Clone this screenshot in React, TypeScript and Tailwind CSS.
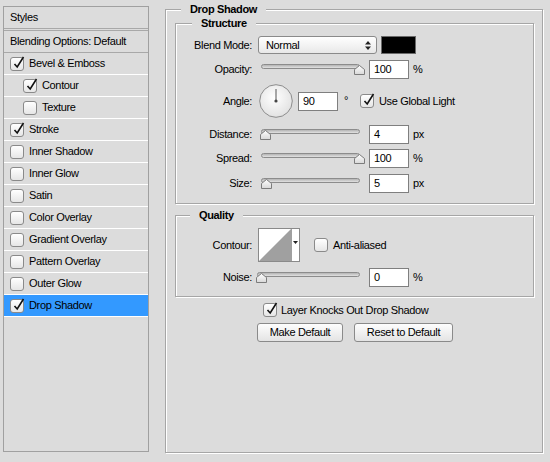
import React from "react";

const font = { fontFamily: '"Liberation Sans", Arial, sans-serif' };

function Check({ checked }: { checked: boolean }) {
  return (
    <div className="relative w-[14px] h-[14px] shrink-0 rounded-[3px] border border-[#8a8a8a] bg-gradient-to-b from-[#ffffff] to-[#e6e6e6]">
      {checked && (
        <svg className="absolute left-[1px] top-[-3px]" width="14" height="15" viewBox="0 0 14 15">
          <path d="M2.5 9 L5.2 12 L11.5 2" fill="none" stroke="#111" strokeWidth="1.6" strokeLinejoin="miter" />
        </svg>
      )}
    </div>
  );
}

const rows: { label: string; checked: boolean; indent?: boolean; selected?: boolean }[] = [
  { label: "Bevel & Emboss", checked: true },
  { label: "Contour", checked: true, indent: true },
  { label: "Texture", checked: false, indent: true },
  { label: "Stroke", checked: true },
  { label: "Inner Shadow", checked: false },
  { label: "Inner Glow", checked: false },
  { label: "Satin", checked: false },
  { label: "Color Overlay", checked: false },
  { label: "Gradient Overlay", checked: false },
  { label: "Pattern Overlay", checked: false },
  { label: "Outer Glow", checked: false },
  { label: "Drop Shadow", checked: true, selected: true },
];

function Slider({ trackLeft, trackWidth, thumb }: { trackLeft: number; trackWidth: number; thumb: number }) {
  return (
    <div className="relative w-[117px] h-[19px] shrink-0">
      <div
        className="absolute top-[4px] h-[5px] rounded-full border border-[#8c8c8c] bg-gradient-to-b from-[#b4b4b4] to-[#e2e2e2]"
        style={{ left: trackLeft, width: trackWidth }}
      />
      <svg className="absolute top-[5px]" style={{ left: thumb }} width="12" height="10" viewBox="0 0 12 10">
        <defs>
          <linearGradient id="tg" x1="0" y1="0" x2="0" y2="1">
            <stop offset="0" stopColor="#ffffff" />
            <stop offset="1" stopColor="#d8d8d8" />
          </linearGradient>
        </defs>
        <polygon points="0.5,9.5 0.5,4.5 5.5,0.5 10.5,4.5 10.5,9.5" fill="url(#tg)" stroke="#7c7c7c" strokeWidth="1" />
      </svg>
    </div>
  );
}

function Input({ value, w = 40 }: { value: string; w?: number }) {
  return (
    <div
      className="h-[19px] shrink-0 border border-[#7f7f7f] bg-white pl-[4px] flex items-center text-[11px] text-black"
      style={{ width: w }}
    >
      {value}
    </div>
  );
}

function Label({ children }: { children: React.ReactNode }) {
  return <div className="w-[76px] shrink-0 text-right text-[11px] text-black">{children}</div>;
}

function Group({
  legend,
  legendLeft,
  className,
  children,
}: {
  legend: string;
  legendLeft: number;
  className: string;
  children: React.ReactNode;
}) {
  return (
    <div
      className={
        "relative border border-[#a6a6a6] shadow-[inset_1px_1px_0_#ffffff,1px_1px_0_#ffffff] " + className
      }
    >
      <div
        className="absolute top-[-8px] bg-[#dcdcdc] px-[9px] text-[11px] font-bold text-black leading-[14px]"
        style={{ left: legendLeft }}
      >
        {legend}
      </div>
      {children}
    </div>
  );
}

function Button({ label, w }: { label: string; w: number }) {
  return (
    <div
      className="h-[19px] shrink-0 rounded-[3px] border border-[#8a8a8a] bg-gradient-to-b from-[#fdfdfd] to-[#e4e4e4] flex items-center justify-center text-[11px] text-black"
      style={{ width: w }}
    >
      {label}
    </div>
  );
}

export default function App() {
  return (
    <div className="w-[550px] h-[462px] bg-[#dcdcdc] flex items-start tracking-[-0.35px]" style={font}>
      {/* Left panel */}
      <div className="ml-[3px] mt-[6px] w-[146px] h-[446px] border border-[#a0a0a0] flex flex-col">
        <div className="h-[22px] shrink-0 flex items-center pl-[6px] text-[11px] text-black border-b border-[#a8a8a8]">Styles</div>
        <div className="h-[23px] shrink-0 mt-[1px] border-t border-b border-[#a8a8a8] flex items-center pl-[6px] text-[11px] text-black">
          Blending Options: Default
        </div>
        {rows.map((r) => (
          <div
            key={r.label}
            className={
              "h-[22px] shrink-0 border-b border-white flex items-center text-[11px] text-black " +
              (r.selected ? "bg-[#3399ff]" : "")
            }
          >
            <div className={r.indent ? "pl-[19px]" : "pl-[6px]"}>
              <Check checked={r.checked} />
            </div>
            <span className="ml-[5px]">{r.label}</span>
          </div>
        ))}
      </div>

      {/* Right panel */}
      <Group legend="Drop Shadow" legendLeft={15} className="ml-[16px] mt-[9px] w-[378px] h-[444px] flex flex-col">
        <Group legend="Structure" legendLeft={16} className="ml-[9px] mt-[13px] w-[359px] h-[181px] pt-[12px] flex flex-col">
          {/* Blend mode */}
          <div className="flex items-center h-[18px]">
            <Label>Blend Mode:</Label>
            <div className="ml-[6px] w-[119px] h-[18px] rounded-[3px] border border-[#8a8a8a] bg-gradient-to-b from-[#ffffff] to-[#e8e8e8] flex items-center pl-[7px] pr-[5px] justify-between text-[11px] text-black">
              <span>Normal</span>
              <svg width="6" height="9" viewBox="0 0 6 9">
                <polygon points="3,0 6,3.5 0,3.5" fill="#222" />
                <polygon points="0,5.5 6,5.5 3,9" fill="#222" />
              </svg>
            </div>
            <div className="ml-[4px] w-[35px] h-[18px] bg-black border border-[#6a6a6a]" />
          </div>
          {/* Opacity */}
          <div className="flex items-center h-[19px] mt-[6px]">
            <Label>Opacity:</Label>
            <Slider trackLeft={9} trackWidth={99} thumb={102} />
            <Input value="100" />
            <span className="ml-[4px] text-[11px] text-black">%</span>
          </div>
          {/* Angle */}
          <div className="flex items-center h-[34px] mt-[5px]">
            <Label>Angle:</Label>
            <svg className="ml-[7px] shrink-0" width="34" height="34" viewBox="0 0 34 34">
              <defs>
                <radialGradient id="dg" cx="0.45" cy="0.4" r="0.6">
                  <stop offset="0" stopColor="#ffffff" />
                  <stop offset="1" stopColor="#e2e2e2" />
                </radialGradient>
              </defs>
              <circle cx="17" cy="17" r="16.3" fill="url(#dg)" stroke="#8c8c8c" strokeWidth="1" />
              <line x1="17" y1="17" x2="17" y2="5" stroke="#555" strokeWidth="1" />
              <circle cx="17" cy="17" r="1.6" fill="#444" />
            </svg>
            <div className="ml-[5px]">
              <Input value="90" />
            </div>
            <span className="w-[22px] pl-[6px] text-[11px] text-black self-start mt-[8px]">°</span>
            <Check checked={true} />
            <span className="ml-[5px] text-[11px] text-black">Use Global Light</span>
          </div>
          {/* Distance */}
          <div className="flex items-center h-[19px] mt-[7px]">
            <Label>Distance:</Label>
            <Slider trackLeft={9} trackWidth={99} thumb={8} />
            <Input value="4" />
            <span className="ml-[4px] text-[11px] text-black">px</span>
          </div>
          {/* Spread */}
          <div className="flex items-center h-[19px] mt-[5px]">
            <Label>Spread:</Label>
            <Slider trackLeft={9} trackWidth={99} thumb={102} />
            <Input value="100" />
            <span className="ml-[4px] text-[11px] text-black">%</span>
          </div>
          {/* Size */}
          <div className="flex items-center h-[19px] mt-[6px]">
            <Label>Size:</Label>
            <Slider trackLeft={9} trackWidth={99} thumb={9} />
            <Input value="5" />
            <span className="ml-[4px] text-[11px] text-black">px</span>
          </div>
        </Group>

        <Group legend="Quality" legendLeft={14} className="ml-[9px] mt-[11px] w-[359px] h-[82px] pt-[12px] flex flex-col">
          <div className="flex items-center h-[34px]">
            <Label>Contour:</Label>
            <div className="ml-[6px] w-[42px] h-[34px] border border-[#8a8a8a] bg-white flex shrink-0">
              <svg width="32" height="32" viewBox="0 0 32 32" className="shrink-0">
                <polygon points="0,32 32,0 32,32" fill="#a0a0a0" />
              </svg>
              <div className="flex-1 border-l border-[#a0a0a0] bg-white flex items-center justify-center">
                <svg width="5" height="3" viewBox="0 0 5 3" className="mb-[6px]">
                  <polygon points="0,0 5,0 2.5,3" fill="#222" />
                </svg>
              </div>
            </div>
            <div className="ml-[14px]">
              <Check checked={false} />
            </div>
            <span className="ml-[5px] text-[11px] text-black">Anti-aliased</span>
          </div>
          <div className="flex items-center h-[19px] mt-[6px]">
            <Label>Noise:</Label>
            <Slider trackLeft={5} trackWidth={103} thumb={4} />
            <Input value="0" />
            <span className="ml-[4px] text-[11px] text-black">%</span>
          </div>
        </Group>

        <div className="mt-[6px] pl-[97px] flex items-center h-[14px]">
          <Check checked={true} />
          <span className="ml-[4px] text-[11px] text-black">Layer Knocks Out Drop Shadow</span>
        </div>
        <div className="mt-[6px] pl-[91px] flex items-center gap-[11px]">
          <Button label="Make Default" w={86} />
          <Button label="Reset to Default" w={99} />
        </div>
      </Group>
    </div>
  );
}
